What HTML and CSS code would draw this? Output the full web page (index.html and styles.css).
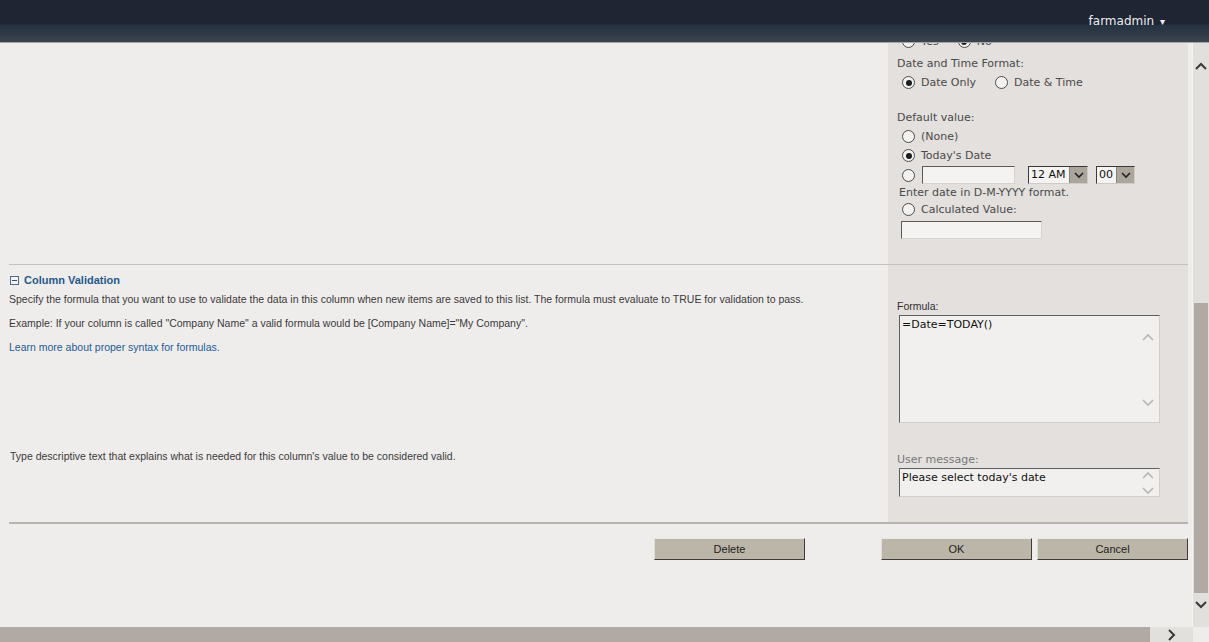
FILE: index.html
```html
<!DOCTYPE html>
<html lang="en">
<head>
    <meta charset="UTF-8">
    <title>Change Column</title>
    <link rel="stylesheet" href="styles.css">
</head>
<body>
    <header class="topbar">
        <span class="user">farmadmin <span class="caret">&#9662;</span></span>
    </header>
    <div class="viewport">
        <div class="pane">
            <div class="form">
                <!-- date settings (scrolled, top is cut) -->
                <div class="section settings">
                    <div class="desc"></div>
                    <div class="panel">
                        <div class="row yesno">
                            <span class="radio"></span><span class="opt">Yes</span>
                            <span class="radio checked"></span><span class="opt">No</span>
                        </div>
                        <div class="label first-label">Date and Time Format:</div>
                        <div class="row">
                            <span class="radio checked"></span><span class="opt">Date Only</span>
                            <span class="radio"></span><span class="opt">Date &amp; Time</span>
                        </div>
                        <div class="label default-label">Default value:</div>
                        <div class="row"><span class="radio"></span><span class="opt">(None)</span></div>
                        <div class="row"><span class="radio checked"></span><span class="opt">Today's Date</span></div>
                        <div class="row custom">
                            <span class="radio"></span>
                            <span class="textbox date-box"></span>
                            <span class="select hour"><span class="val">12 AM</span><span class="arrow"><svg width="10" height="7" viewBox="0 0 10 7"><path d="M1 1 L5 5 L9 1" fill="none" stroke="#222" stroke-width="1.6"/></svg></span></span>
                            <span class="select minute"><span class="val">00</span><span class="arrow"><svg width="10" height="7" viewBox="0 0 10 7"><path d="M1 1 L5 5 L9 1" fill="none" stroke="#222" stroke-width="1.6"/></svg></span></span>
                        </div>
                        <div class="hint">Enter date in D-M-YYYY format.</div>
                        <div class="row calc"><span class="radio"></span><span class="opt">Calculated Value:</span></div>
                        <span class="textbox calc-box"></span>
                    </div>
                </div>

                <!-- column validation -->
                <div class="section validation">
                    <div class="desc">
                        <h3 class="title"><span class="collapse"></span>Column Validation</h3>
                        <p class="first">Specify the formula that you want to use to validate the data in this column when new items are saved to this list. The formula must evaluate to TRUE for validation to pass.</p>
                        <p>Example: If your column is called "Company Name" a valid formula would be [Company Name]="My Company".</p>
                        <p><a href="#">Learn more about proper syntax for formulas.</a></p>
                        <p class="msg-desc">Type descriptive text that explains what is needed for this column's value to be considered valid.</p>
                    </div>
                    <div class="panel">
                        <div class="formula-label">Formula:</div>
                        <div class="area formula">
                            <span class="area-text">=Date=TODAY()</span>
                            <span class="area-scroll">
                                <svg width="12" height="8" viewBox="0 0 12 8"><path d="M1 7 L6 2 L11 7" fill="none" stroke="#b9b6b2" stroke-width="1.6"/></svg>
                                <svg width="12" height="8" viewBox="0 0 12 8"><path d="M1 1 L6 6 L11 1" fill="none" stroke="#b9b6b2" stroke-width="1.6"/></svg>
                            </span>
                        </div>
                        <div class="label msg-label">User message:</div>
                        <div class="area message">
                            <span class="area-text">Please select today's date</span>
                            <span class="area-scroll">
                                <svg width="12" height="8" viewBox="0 0 12 8"><path d="M1 7 L6 2 L11 7" fill="none" stroke="#b9b6b2" stroke-width="1.6"/></svg>
                                <svg width="12" height="8" viewBox="0 0 12 8"><path d="M1 1 L6 6 L11 1" fill="none" stroke="#b9b6b2" stroke-width="1.6"/></svg>
                            </span>
                        </div>
                    </div>
                </div>

                <div class="buttons">
                    <button class="btn delete">Delete</button>
                    <button class="btn">OK</button>
                    <button class="btn">Cancel</button>
                </div>
            </div>
        </div>
        <div class="vscroll">
            <span class="sb-arrow"><svg width="12" height="8" viewBox="0 0 12 8"><path d="M1 7 L6 2 L11 7" fill="none" stroke="#3a3a3a" stroke-width="2"/></svg></span>
            <span class="sb-track"><span class="sb-thumb"></span></span>
            <span class="sb-arrow"><svg width="12" height="8" viewBox="0 0 12 8"><path d="M1 1 L6 6 L11 1" fill="none" stroke="#3a3a3a" stroke-width="2"/></svg></span>
        </div>
    </div>
    <div class="hscroll">
        <span class="h-thumb"></span>
        <span class="h-arrow"><svg width="8" height="12" viewBox="0 0 8 12"><path d="M1 1 L6 6 L1 11" fill="none" stroke="#3a3a3a" stroke-width="2"/></svg></span>
        <span class="corner"></span>
    </div>
</body>
</html>
```

FILE: styles.css
```css
body {
    margin: 0;
    width: 1209px;
    height: 642px;
    overflow: hidden;
    background-color: #efedeb;
    font-family: "DejaVu Sans", Verdana, sans-serif;
    font-size: 11px;
    color: #444;
}
.topbar {
    height: 42px;
    border-bottom: 1px solid #a4a6a9;
    background: linear-gradient(to bottom, #1f2533 0, #1f2533 24px, #253241 25px, #2e3946 33px, #3b4550 42px);
    display: flex;
    justify-content: flex-end;
    align-items: flex-start;
}
.user {
    color: #eceef0;
    font-size: 12px;
    margin: 14px 44px 0 0;
}
.caret {
    font-size: 10px;
    margin-left: 2px;
}
.viewport {
    display: flex;
    height: 584px;
}
.pane {
    flex: 1;
    overflow: hidden;
    padding: 0 5px 0 9px;
}
.form {
    width: 1179px;
}
.section {
    display: grid;
    grid-template-columns: 879px 300px;
}
.settings {
    height: 221px;
    border-bottom: 1px solid #c6c2be;
}
.validation {
    height: 257px;
    border-bottom: 2px solid #b7b3af;
}
.panel {
    background-color: #e3e0dd;
    padding-left: 9px;
    display: flex;
    flex-direction: column;
    align-items: flex-start;
}
.settings .panel {
    overflow: hidden;
}

/* radios and fields */
.row {
    height: 19px;
    display: flex;
    align-items: center;
    padding-left: 5px;
}
.yesno {
    margin-top: -11px;
}
.radio {
    width: 11px;
    height: 11px;
    border: 1px solid #4d4d4d;
    border-radius: 50%;
    background-color: #f3f2f0;
    position: relative;
    flex: none;
}
.radio.checked::after {
    content: "";
    position: absolute;
    left: 2.5px;
    top: 2.5px;
    width: 6px;
    height: 6px;
    border-radius: 50%;
    background-color: #1c1c1c;
}
.opt {
    margin-left: 6px;
    margin-right: 19px;
    color: #4a4a4a;
}
.label {
    height: 18px;
    line-height: 18px;
    color: #4a4a4a;
}
.first-label {
    margin-top: 4px;
}
.default-label {
    margin-top: 17px;
}
.custom {
    height: 20px;
}
.textbox {
    display: block;
    height: 16px;
    border: 1px solid;
    border-color: #5a5a5a #d6d3cf #d6d3cf #5a5a5a;
    background-color: #f4f3f1;
}
.date-box {
    width: 91px;
    margin-left: 7px;
}
.select {
    display: flex;
    height: 16px;
    border: 1px solid;
    border-color: #3a3a3a #cfccc8 #cfccc8 #3a3a3a;
    background-color: #f4f3f1;
    color: #111;
}
.select .val {
    padding: 0 2px;
    line-height: 16px;
}
.select .arrow {
    width: 17px;
    background-color: #aba69c;
    border-left: 1px solid #8a857c;
    display: flex;
    align-items: center;
    justify-content: center;
}
.hour {
    margin-left: 13px;
    width: 58px;
    justify-content: space-between;
}
.minute {
    margin-left: 8px;
    width: 37px;
    justify-content: space-between;
}
.hint {
    height: 16px;
    line-height: 16px;
    margin-left: 2px;
    color: #4a4a4a;
}
.calc {
    height: 16px;
}
.calc-box {
    width: 139px;
    margin: 4px 0 0 4px;
}

/* validation description */
.desc {
    font-family: "Liberation Sans", Tahoma, sans-serif;
    font-size: 10.5px;
    color: #3a3a3a;
}
.title {
    margin: 7px 0 0 1px;
    height: 16px;
    line-height: 16px;
    font-size: 11px;
    font-weight: bold;
    color: #1f5a8a;
    display: flex;
    align-items: center;
}
.collapse {
    width: 7px;
    height: 7px;
    border: 1px solid #4c6e8c;
    margin-right: 5px;
    position: relative;
    background-color: #f4f4f4;
}
.collapse::after {
    content: "";
    position: absolute;
    left: 1px;
    right: 1px;
    top: 3px;
    height: 1px;
    background-color: #2f4f6a;
}
.desc p {
    margin: 8px 0 0;
    line-height: 16px;
}
.desc p.first {
    margin-top: 3px;
}
.desc a {
    color: #1b5c96;
    text-decoration: none;
}
.desc p.msg-desc {
    margin-top: 93px;
    padding-left: 1px;
}
.formula-label {
    margin: 34px 0 2px;
    height: 14px;
    line-height: 14px;
    font-family: "Liberation Sans", Tahoma, sans-serif;
    font-size: 10.5px;
    color: #2e2e2e;
}
.area {
    margin-left: 2px;
    width: 261px;
    border: 1px solid;
    border-color: #5e5e5e #d2cfcb #d2cfcb #5e5e5e;
    background-color: #f1f0ee;
    display: flex;
    justify-content: space-between;
    box-sizing: border-box;
    color: #111;
}
.area-text {
    padding: 2px 0 0 2px;
}
.area-scroll {
    display: flex;
    flex-direction: column;
    justify-content: space-between;
    align-items: center;
    width: 16px;
    margin-right: 3px;
}
.formula {
    height: 108px;
}
.formula .area-scroll {
    padding: 17px 0 15px;
}
.message {
    height: 29px;
}
.message .area-scroll {
    padding: 2px 0 1px;
}
.msg-label {
    margin-top: 29px;
    height: 16px;
    line-height: 16px;
    color: #777;
}

/* buttons */
.buttons {
    display: flex;
    justify-content: flex-end;
    gap: 5px;
    padding-top: 14px;
}
.btn {
    width: 151px;
    height: 22px;
    background-color: #bcb6a8;
    border: 1px solid;
    border-color: #ebe8e3 #3e3c39 #3e3c39 #e0ddd7;
    font-family: "Liberation Sans", Tahoma, sans-serif;
    font-size: 11px;
    color: #1e1e1e;
    padding: 0;
}
.btn.delete {
    margin-right: 71px;
}

/* scrollbars */
.vscroll {
    width: 16px;
    display: flex;
    flex-direction: column;
    background-color: #e2e0dd;
    border-left: 1px solid #f4f3f1;
}
.sb-arrow {
    height: 18px;
    display: flex;
    align-items: center;
    justify-content: center;
}
.sb-arrow:first-child {
    margin-top: 14px;
}
.sb-track {
    flex: 1;
    display: flex;
    flex-direction: column;
    justify-content: flex-end;
    padding: 0 1px;
}
.sb-thumb {
    height: 290px;
    background-color: #b1aaa4;
    margin-bottom: 3px;
}
.sb-arrow:last-child {
    margin-bottom: 13px;
}
.hscroll {
    height: 15px;
    display: flex;
    background-color: #e2e0dd;
}
.h-thumb {
    width: 1150px;
    background-color: #b1aaa4;
}
.h-arrow {
    width: 43px;
    display: flex;
    align-items: center;
    justify-content: center;
}
.corner {
    width: 16px;
    background-color: #efedeb;
}
```
